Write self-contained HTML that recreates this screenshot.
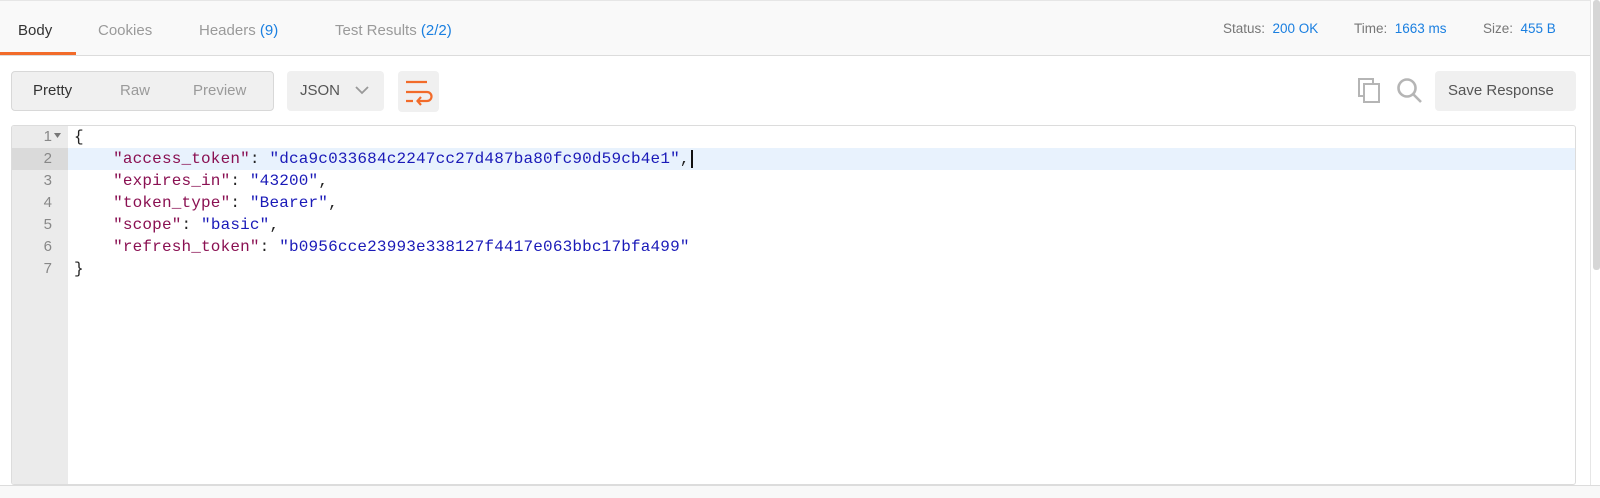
<!DOCTYPE html>
<html><head><meta charset="utf-8"><style>
*{margin:0;padding:0;box-sizing:border-box}
body{width:1600px;height:498px;overflow:hidden;background:#fff;font-family:"Liberation Sans",sans-serif;position:relative}
.abs{position:absolute}
.hdr{left:0;top:0;width:1590px;height:56px;background:#f9f9f9;border-bottom:1px solid #dcdcdc;border-top:1px solid #e6e6e6}
.tab{top:22px;font-size:15px;color:#9a9a9a}
.blue{color:#1a7fe0}
.st{top:21px;font-size:13.5px;color:#777}
.btn{background:#f0f0f0;border-radius:4px}
.code{font-family:"Liberation Mono",monospace;font-size:16px;letter-spacing:0.17px;line-height:22px;white-space:pre}
.k{color:#8a1052}.s{color:#1a1ab8}.p{color:#222}
.ln{font-family:"Liberation Sans",sans-serif;font-size:15px;color:#888;text-align:right;width:40px;line-height:22px}
</style></head><body>
<div class="abs hdr"></div>
<div class="abs tab" style="left:18px;color:#333">Body</div>
<div class="abs" style="left:0;top:52px;width:76px;height:3px;background:#f26b2a"></div>
<div class="abs tab" style="left:98px">Cookies</div>
<div class="abs tab" style="left:199px">Headers <span class="blue">(9)</span></div>
<div class="abs tab" style="left:335px">Test Results <span class="blue">(2/2)</span></div>
<div class="abs st" style="left:1223px">Status: <span class="blue">&nbsp;200 OK</span></div>
<div class="abs st" style="left:1354px">Time: <span class="blue">&nbsp;1663 ms</span></div>
<div class="abs st" style="left:1483px">Size: <span class="blue">&nbsp;455 B</span></div>
<div class="abs" style="left:1590px;top:0;width:1px;height:498px;background:#e6e6e6"></div>
<div class="abs" style="left:1593px;top:0;width:7px;height:270px;background:#d6d6d6;border-radius:3px"></div>

<div class="abs btn" style="left:11px;top:71px;width:263px;height:40px;border:1px solid #d8d8d8"></div>
<div class="abs" style="left:33px;top:82px;font-size:15px;color:#333">Pretty</div>
<div class="abs" style="left:120px;top:82px;font-size:15px;color:#9a9a9a">Raw</div>
<div class="abs" style="left:193px;top:82px;font-size:15px;color:#9a9a9a">Preview</div>
<div class="abs btn" style="left:287px;top:71px;width:97px;height:40px"></div>
<div class="abs" style="left:300px;top:82px;font-size:15px;color:#555">JSON</div>
<svg class="abs" style="left:354px;top:84px" width="16" height="12"><path d="M2 3 L8 9 L14 3" fill="none" stroke="#999" stroke-width="1.8"/></svg>
<div class="abs btn" style="left:398px;top:71px;width:41px;height:41px"></div>
<svg class="abs" style="left:398px;top:71px" width="41" height="41"><g stroke="#f26b2a" stroke-width="2.2" fill="none"><path d="M8 11H29M8 21H29a4.5 4.5 0 0 1 0 9H20M8 30H15"/><path d="M23 26L19.5 30L23 34"/></g></svg>
<svg class="abs" style="left:1356px;top:76px" width="28" height="28"><g fill="#fff" stroke="#b5b5b5" stroke-width="2"><rect x="3" y="3" width="14" height="17"/><rect x="8" y="8" width="15" height="18"/></g></svg>
<svg class="abs" style="left:1395px;top:76px" width="30" height="30"><g fill="none" stroke="#b5b5b5" stroke-width="2.6"><circle cx="12" cy="12" r="8.5"/><path d="M18 18L26 26"/></g></svg>
<div class="abs btn" style="left:1435px;top:71px;width:141px;height:40px"></div>
<div class="abs" style="left:1448px;top:82px;font-size:15px;color:#555">Save Response</div>

<div class="abs" style="left:11px;top:125px;width:1565px;height:360px;border:1px solid #dcdcdc;border-radius:3px;background:#fff;overflow:hidden">
  <div class="abs" style="left:0;top:0;width:56px;height:360px;background:#ebebeb"></div>
  <div class="abs" style="left:0;top:22px;width:56px;height:22px;background:#dadada"></div>
  <div class="abs" style="left:56px;top:22px;width:1510px;height:22px;background:#e8f2fd"></div>
  <div class="abs ln" style="left:0;top:0">1<br>2<br>3<br>4<br>5<br>6<br>7</div>
  <svg class="abs" style="left:42px;top:7px" width="8" height="6"><path d="M0 0H7L3.5 5Z" fill="#777"/></svg>
  <div class="abs code" style="left:62px;top:0"><span class="p">{</span>
    <span class="k">"access_token"</span><span class="p">: </span><span class="s">"dca9c033684c2247cc27d487ba80fc90d59cb4e1"</span><span class="p">,</span><span style="border-left:2px solid #111;margin-left:1px"></span>
    <span class="k">"expires_in"</span><span class="p">: </span><span class="s">"43200"</span><span class="p">,</span>
    <span class="k">"token_type"</span><span class="p">: </span><span class="s">"Bearer"</span><span class="p">,</span>
    <span class="k">"scope"</span><span class="p">: </span><span class="s">"basic"</span><span class="p">,</span>
    <span class="k">"refresh_token"</span><span class="p">: </span><span class="s">"b0956cce23993e338127f4417e063bbc17bfa499"</span>
<span class="p">}</span></div>
</div>
<div class="abs" style="left:0;top:485px;width:1600px;height:13px;background:#f8f8f8;border-top:1px solid #dcdcdc"></div>
</body></html>
